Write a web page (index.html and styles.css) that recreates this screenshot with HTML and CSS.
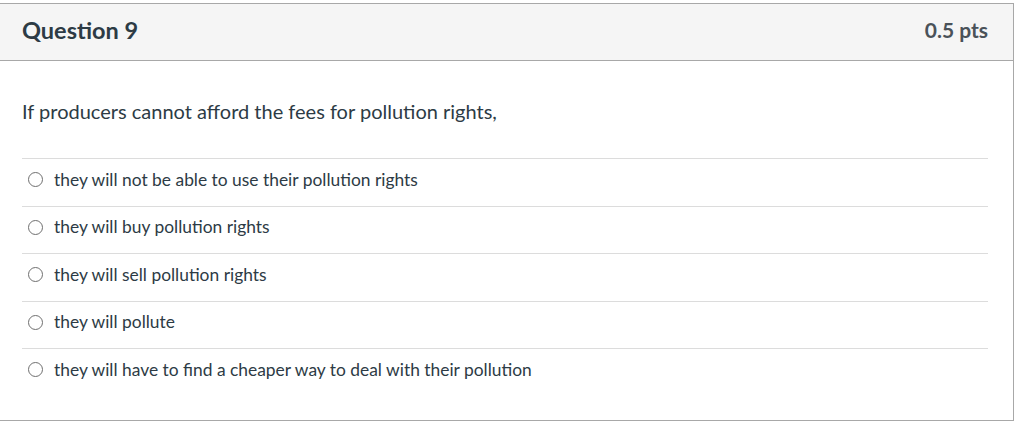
FILE: index.html
```html
<!DOCTYPE html>
<html>
<head>
<meta charset="utf-8">
<link rel="stylesheet" href="styles.css">
</head>
<body>
<div class="question">
  <div class="header">
    <div class="title">Question 9</div>
    <div class="pts">0.5 pts</div>
  </div>
  <div class="content">
    <p class="text">If producers cannot afford the fees for pollution rights,</p>
    <div class="answers">
      <div class="answer"><span class="radio"></span><span class="label">they will not be able to use their pollution rights</span></div>
      <div class="answer"><span class="radio"></span><span class="label">they will buy pollution rights</span></div>
      <div class="answer"><span class="radio"></span><span class="label">they will sell pollution rights</span></div>
      <div class="answer"><span class="radio"></span><span class="label">they will pollute</span></div>
      <div class="answer"><span class="radio"></span><span class="label">they will have to find a cheaper way to deal with their pollution</span></div>
    </div>
  </div>
</div>
</body>
</html>
```
FILE: styles.css
```css
html, body {
  margin: 0;
  padding: 0;
  background: #fff;
}
body {
  font-family: Lato, "Noto Sans", sans-serif;
  color: #2d3b45;
}
.question {
  box-sizing: border-box;
  margin: 3px 0 0 -1px;
  width: 1015px;
  height: 418px;
  border: 1px solid #a8a8a8;
}
.header {
  box-sizing: border-box;
  height: 57px;
  background: #f5f5f5;
  border-bottom: 1px solid #a8a8a8;
  display: flex;
  align-items: center;
  justify-content: space-between;
  padding: 0 25px 5px 22px;
}
.title {
  font-size: 23.5px;
  font-weight: 700;
}
.pts {
  font-size: 21px;
  font-weight: 700;
  color: #4a5259;
}
.content {
  padding: 0 25px 0 22px;
}
.text {
  margin: 0;
  padding-top: 38px;
  height: 57px;
  box-sizing: border-box;
  font-size: 20px;
  line-height: 24px;
}
.answers {
  margin-top: 40px;
}
.answer {
  display: flex;
  align-items: center;
  height: 47.5px;
  padding-bottom: 5px;
  border-top: 1px solid #dcdcdc;
  box-sizing: border-box;
  font-size: 17.4px;
}
.radio {
  box-sizing: border-box;
  width: 15px;
  height: 15px;
  border: 1.3px solid #6f6f6f;
  border-radius: 50%;
  margin: 0 11px 0 6px;
  flex: none;
}
.label {
  line-height: 20px;
}
```
